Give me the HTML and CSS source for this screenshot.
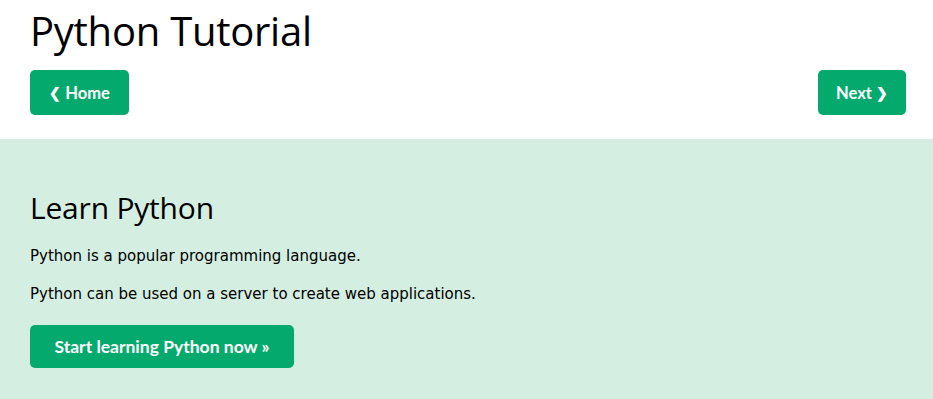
FILE: index.html
```html
<!DOCTYPE html>
<html>
<head>
<meta charset="utf-8">
<link rel="stylesheet" href="styles.css">
</head>
<body>
<header class="top">
  <h1 class="title">Python Tutorial</h1>
  <nav class="nav">
    <a class="btn btn-nav" href="#"><span class="chev">&#10094;</span>Home</a>
    <a class="btn btn-nav" href="#">Next<span class="chev">&#10095;</span></a>
  </nav>
</header>
<section class="band">
  <h2 class="sub">Learn Python</h2>
  <p class="txt">Python is a popular programming language.</p>
  <p class="txt">Python can be used on a server to create web applications.</p>
  <a class="btn btn-big" href="#">Start learning Python now &raquo;</a>
</section>
</body>
</html>
```
FILE: styles.css
```css
html, body { margin: 0; padding: 0; background: #fff; }
body { font-family: "DejaVu Sans", Verdana, sans-serif; color: #000; }
.top { padding: 0 27px 24px 30px; }
.title {
  margin: 0;
  padding-top: 4px;
  font-family: "Open Sans", "Noto Sans", sans-serif;
  font-weight: 400;
  font-size: 40px;
  line-height: 54px;
  letter-spacing: -0.25px;
}
.nav { display: flex; justify-content: space-between; margin-top: 12px; }
.btn {
  display: inline-flex; align-items: center; justify-content: center;
  background: #04AA6D; color: #fff; text-decoration: none;
  font-family: "Lato", "Open Sans", sans-serif; font-weight: 700;
  border-radius: 5px;
}
.btn-nav { height: 45px; font-size: 16.5px; gap: 4px; }
.btn-nav:first-child { width: 99px; }
.btn-nav:last-child { width: 88px; }
.chev { font-size: 14px; font-weight: 900; }
.band { background: #D4EFE1; padding: 47px 30px 31px 30px; }
.sub {
  margin: 0;
  font-family: "Open Sans", "Noto Sans", sans-serif;
  font-weight: 400; font-size: 30px; line-height: 44px;
  letter-spacing: -0.2px;
}
.txt { margin: 15px 0 0 0; font-size: 15px; line-height: 23px; }
.txt + .txt { margin-top: 15px; }
.btn-big { margin-top: 19px; height: 43px; width: 264px; font-size: 17.5px; }
```
